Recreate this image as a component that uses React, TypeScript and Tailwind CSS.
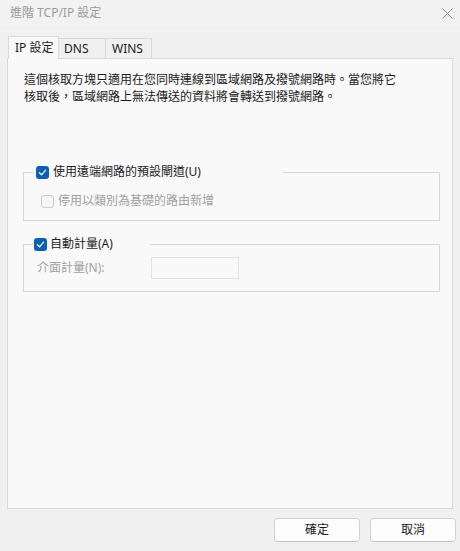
import React from "react";

const font = {
  fontFamily: '"Segoe UI", "Noto Sans", "Noto Sans CJK TC", sans-serif',
};

function Checked() {
  return (
    <span className="flex h-[13px] w-[13px] shrink-0 items-center justify-center rounded-[3px] bg-[#0b5fb5]">
      <svg width="9" height="9" viewBox="0 0 9 9" fill="none">
        <path d="M1.4 4.7 L3.6 6.8 L7.6 2.1" stroke="white" strokeWidth="1.2" strokeLinecap="round" strokeLinejoin="round" />
      </svg>
    </span>
  );
}

function Unchecked() {
  return <span className="block h-[13px] w-[13px] shrink-0 rounded-[3px] border border-[#cdcdcd] bg-[#f6f6f6]" />;
}

export default function App() {
  return (
    <div className="flex h-[551px] w-[460px] flex-col bg-[#f0f0f0] text-[12px] text-[#1b1b1b]" style={font}>
      <div className="flex h-[26px] items-center justify-between bg-[#f2f2f2] pl-[10px] pr-[7px]">
        <span className="text-[12px] text-[#9a9a9a]">進階 TCP/IP 設定</span>
        <svg width="11" height="11" viewBox="0 0 11 11" fill="none">
          <path d="M0.5 0.5 L10.5 10.5 M10.5 0.5 L0.5 10.5" stroke="#8a8a8a" strokeWidth="0.9" />
        </svg>
      </div>

      <div className="mt-[10px] ml-[8px] flex h-[22px] items-end">
        <div className="relative z-10 -mb-px flex h-[23px] w-[51px] items-center border-l border-r border-t border-[#d9d9d9] bg-[#f9f9f9] pl-[6px] pb-px">
          IP 設定
        </div>
        <div className="flex h-[20px] w-[47px] items-center border-r border-t border-[#d9d9d9] pl-[5px]">DNS</div>
        <div className="flex h-[20px] w-[46px] items-center border-r border-t border-[#d9d9d9] pl-[6px]">WINS</div>
      </div>

      <div className="ml-[7px] h-[451px] w-[446px] border border-[#d9d9d9] bg-[#f9f9f9] pt-[12px]">
        <div className="pl-[16px] leading-[17px]">
          <div>這個核取方塊只適用在您同時連線到區域網路及撥號網路時。當您將它</div>
          <div>核取後，區域網路上無法傳送的資料將會轉送到撥號網路。</div>
        </div>

        <fieldset className="mt-[59px] ml-[15px] w-[417px] border border-[#d7d7d7] px-0 pb-[11px]">
          <legend className="ml-[9px] flex h-[16px] w-[250px] items-center gap-[4px] pl-[3px]">
            <Checked />
            <span>使用遠端網路的預設閘道(U)</span>
          </legend>
          <div className="mt-[13px] flex h-[16px] items-center gap-[4px] pl-[17px] text-[#a0a0a0]">
            <Unchecked />
            <span>停用以類別為基礎的路由新增</span>
          </div>
        </fieldset>

        <fieldset className="mt-[15px] ml-[15px] w-[417px] border border-[#d7d7d7] px-0 pb-[12px]">
          <legend className="ml-[9px] flex h-[16px] w-[117px] items-center gap-[3px] pl-[1px]">
            <Checked />
            <span>自動計量(A)</span>
          </legend>
          <div className="mt-[5px] flex h-[22px] items-center pl-[13px]">
            <span className="w-[114px] text-[#a0a0a0]">介面計量(N):</span>
            <div className="h-[22px] w-[88px] border border-[#e2e2e2] bg-[#f9f9f9]" />
          </div>
        </fieldset>
      </div>

      <div className="mt-[9px] flex justify-end gap-[10px] pr-[4px]">
        <button className="flex h-[24px] w-[86px] items-center justify-center rounded-[4px] border border-[#d3d3d3] border-b-[#c2c2c2] bg-[#fdfdfd] text-[12px] text-[#1b1b1b]">
          確定
        </button>
        <button className="flex h-[24px] w-[86px] items-center justify-center rounded-[4px] border border-[#d3d3d3] border-b-[#c2c2c2] bg-[#fdfdfd] text-[12px] text-[#1b1b1b]">
          取消
        </button>
      </div>
    </div>
  );
}
